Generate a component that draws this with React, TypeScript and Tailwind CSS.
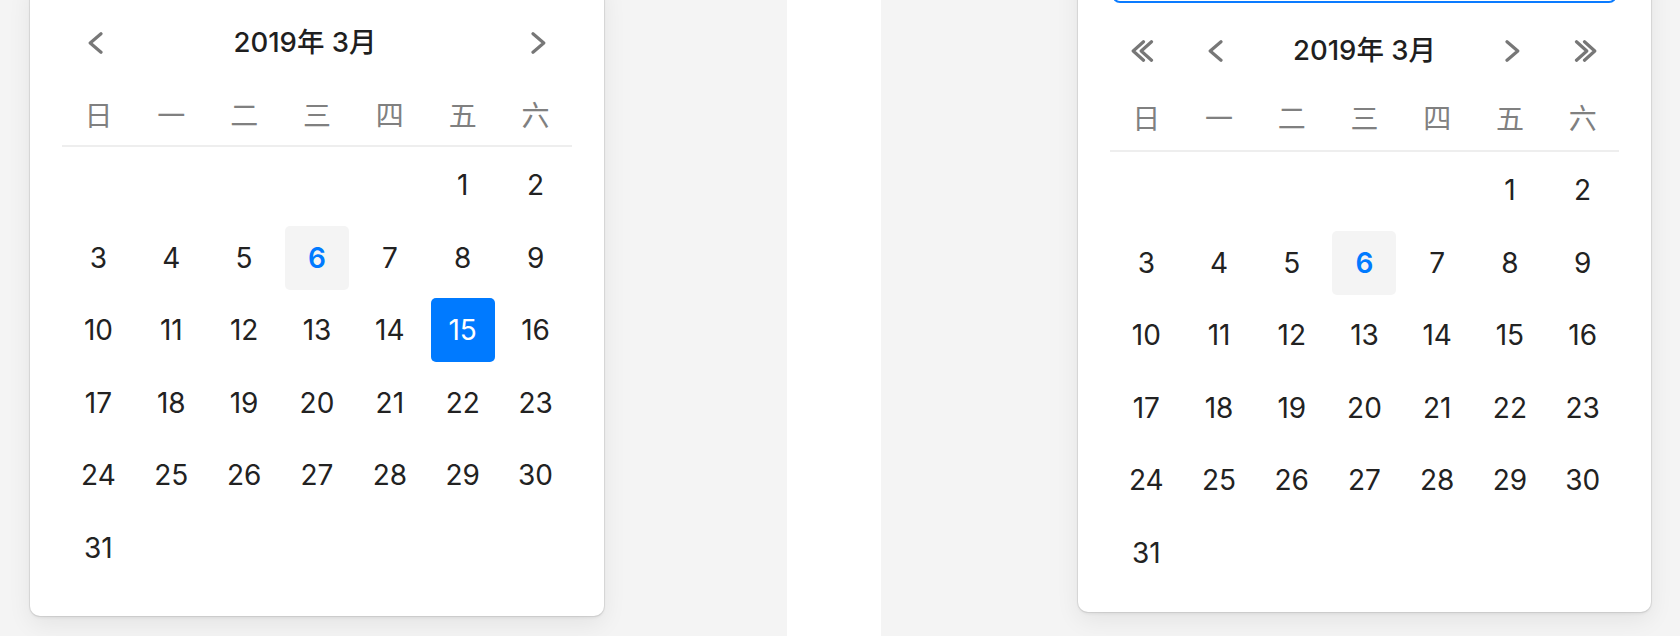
const WEEKDAYS = ['日', '一', '二', '三', '四', '五', '六']

// March 2019 starts on a Friday
const DAYS: (number | null)[] = [
  ...Array.from({ length: 5 }, () => null),
  ...Array.from({ length: 31 }, (_, i) => i + 1),
]

function Chevron({ dir }: { dir: 'left' | 'right' }) {
  return (
    <svg
      width="15"
      height="22"
      viewBox="0 0 15 22"
      fill="none"
      stroke="#777777"
      strokeWidth="3.2"
      strokeLinecap="round"
      strokeLinejoin="round"
      className={dir === 'right' ? 'rotate-180' : ''}
    >
      <polyline points="13,1.8 2.2,11 13,20.2" />
    </svg>
  )
}

function DoubleChevron({ dir }: { dir: 'left' | 'right' }) {
  return (
    <svg
      width="23"
      height="22"
      viewBox="0 0 23 22"
      fill="none"
      stroke="#777777"
      strokeWidth="3.2"
      strokeLinecap="round"
      strokeLinejoin="round"
      className={dir === 'right' ? 'rotate-180' : ''}
    >
      <polyline points="12.5,1.8 2.2,11 12.5,20.2" />
      <polyline points="20.5,1.8 10.2,11 20.5,20.2" />
    </svg>
  )
}

function DayGrid({ today, selected }: { today: number; selected?: number }) {
  return (
    <div className="mt-[2px] grid grid-cols-7">
      {DAYS.map((day, i) => {
        if (day === null) return <div key={`e${i}`} className="h-[72.5px]" />
        const isToday = day === today
        const isSelected = day === selected
        return (
          <div key={day} className="flex h-[72.5px] items-center justify-center">
            <div
              className={`flex h-[64px] w-[64px] items-center justify-center rounded-[5px] text-[28px] ${
                isSelected
                  ? 'bg-[#007aff] text-white'
                  : isToday
                    ? 'bg-[#f4f4f4] font-semibold text-[#007aff]'
                    : 'text-[#222222]'
              }`}
            >
              {day}
            </div>
          </div>
        )
      })}
    </div>
  )
}

function Weekdays({ className }: { className: string }) {
  return (
    <div className={`grid grid-cols-7 border-b-2 border-[#eeeeee] ${className}`}>
      {WEEKDAYS.map((w) => (
        <div key={w} className="flex items-center justify-center text-[28px] text-[#808080]">
          {w}
        </div>
      ))}
    </div>
  )
}

function SimpleCalendar() {
  return (
    <div className="-mt-[20px] w-[574px] rounded-[10px] bg-white px-[32px] pt-[34px] pb-[32px] shadow-[0_0_0_1px_rgba(0,0,0,0.07),0_2px_3px_rgba(0,0,0,0.06),0_8px_24px_rgba(0,0,0,0.07)]">
      <div className="flex h-[58px] items-center">
        <div className="flex w-[72.86px] justify-center">
          <div className="-translate-x-[3px]">
            <Chevron dir="left" />
          </div>
        </div>
        <div className="flex-1 pr-[24px] text-center text-[27.5px] font-medium text-[#1f1f1f]">2019年 3月</div>
        <div className="flex w-[72.86px] justify-center">
          <div className="translate-x-[3px]">
            <Chevron dir="right" />
          </div>
        </div>
      </div>
      <Weekdays className="mt-[15px] h-[60px]" />
      <DayGrid today={6} selected={15} />
    </div>
  )
}

function InputCalendar() {
  return (
    <div className="-mt-[93px] w-[573px] rounded-[10px] bg-white px-[32px] pt-[32px] pb-[23px] shadow-[0_0_0_1px_rgba(0,0,0,0.07),0_2px_3px_rgba(0,0,0,0.06),0_8px_24px_rgba(0,0,0,0.07)]">
      <div className="mx-[2px] h-[64px] rounded-[8px] border-2 border-[#0a7bff]" />
      <div className="mt-[19px] flex h-[58px] items-center">
        <div className="flex w-[72.86px] justify-center">
          <div className="-translate-x-[4px]">
            <DoubleChevron dir="left" />
          </div>
        </div>
        <div className="flex w-[72.86px] justify-center">
          <div className="-translate-x-[4px]">
            <Chevron dir="left" />
          </div>
        </div>
        <div className="flex-1 text-center text-[27.5px] font-medium text-[#1f1f1f]">2019年 3月</div>
        <div className="flex w-[72.86px] justify-center">
          <div className="translate-x-[3px]">
            <Chevron dir="right" />
          </div>
        </div>
        <div className="flex w-[72.86px] justify-center">
          <div className="translate-x-[3px]">
            <DoubleChevron dir="right" />
          </div>
        </div>
      </div>
      <Weekdays className="mt-[8px] h-[64px]" />
      <DayGrid today={6} />
    </div>
  )
}

export default function App() {
  return (
    <div
      className="flex h-[636px] w-[1680px] overflow-hidden bg-[#f4f4f4]"
      style={{ fontFamily: 'Inter, "Noto Sans CJK SC", sans-serif' }}
    >
      <div className="w-[787px] shrink-0 pl-[30px]">
        <SimpleCalendar />
      </div>
      <div className="w-[94px] shrink-0 bg-white" />
      <div className="flex-1 pl-[197px]">
        <InputCalendar />
      </div>
    </div>
  )
}
